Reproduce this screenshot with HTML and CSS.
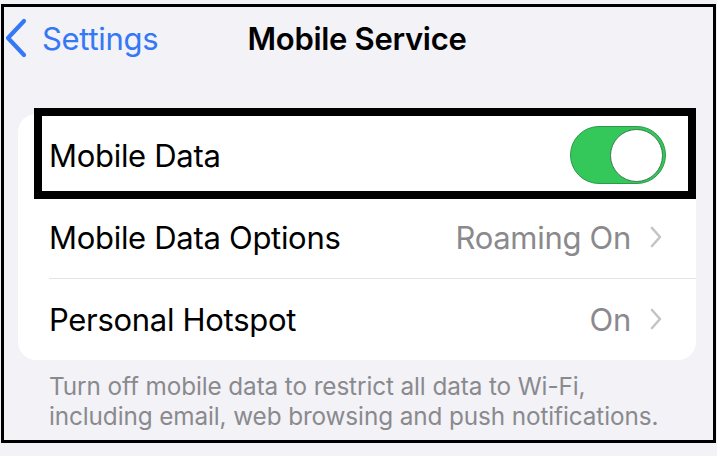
FILE: index.html
```html
<!DOCTYPE html>
<html>
<head>
<meta charset="utf-8">
<link rel="stylesheet" href="styles.css">
</head>
<body>
<div class="frame">
  <div class="nav">
    <div class="back">
      <svg class="back-chev" width="24" height="40" viewBox="0 0 24 40"><path d="M20 3 L4 20 L20 37" fill="none" stroke="#3478f6" stroke-width="4.2" stroke-linecap="round" stroke-linejoin="round"/></svg>
      <span>Settings</span>
    </div>
    <div class="title">Mobile Service</div>
  </div>
  <div class="card">
    <div class="row">
      <span class="label">Mobile Data</span>
      <span class="toggle"><span class="knob"></span></span>
    </div>
    <div class="row sep">
      <span class="label">Mobile Data Options</span>
      <span class="value">Roaming On
        <svg class="chev" width="14" height="22" viewBox="0 0 14 22"><path d="M3 2 L11 11 L3 20" fill="none" stroke="#c4c4c8" stroke-width="2.6" stroke-linecap="round" stroke-linejoin="round"/></svg>
      </span>
    </div>
    <div class="row sep">
      <span class="label">Personal Hotspot</span>
      <span class="value">On
        <svg class="chev" width="14" height="22" viewBox="0 0 14 22"><path d="M3 2 L11 11 L3 20" fill="none" stroke="#c4c4c8" stroke-width="2.6" stroke-linecap="round" stroke-linejoin="round"/></svg>
      </span>
    </div>
    <div class="highlight"></div>
  </div>
  <p class="footer">Turn off mobile data to restrict all data to Wi-Fi,<br>including email, web browsing and push notifications.</p>
</div>
</body>
</html>
```

FILE: styles.css
```css
html, body {
  margin: 0;
  padding: 0;
  background: #f2f2f7;
  font-family: Inter, "Liberation Sans", sans-serif;
}
.frame {
  box-sizing: border-box;
  width: 715px;
  height: 439px;
  margin: 4px 0 0 1px;
  border: 3px solid #000;
  background: #f2f2f7;
  overflow: hidden;
}
.nav {
  position: relative;
  height: 62px;
  display: flex;
  align-items: center;
  justify-content: center;
}
.back {
  position: absolute;
  left: 0;
  top: 11px;
  display: flex;
  align-items: center;
  gap: 14px;
  color: #3478f6;
  font-size: 31px;
  letter-spacing: -0.3px;
}
.title {
  font-size: 31px;
  font-weight: 600;
  color: #000;
  letter-spacing: -0.3px;
  margin-left: -3px;
}
.card {
  position: relative;
  margin: 45px 17px 0 14px;
  background: #fff;
  border-radius: 18px;
}
.row {
  height: 82px;
  display: flex;
  align-items: center;
  justify-content: space-between;
  padding: 0 30px 0 31px;
  font-size: 31px;
  letter-spacing: -0.3px;
  color: #000;
  position: relative;
}
.row.sep::before {
  content: "";
  position: absolute;
  left: 31px;
  right: 0;
  top: 0;
  border-top: 1px solid #e3e3e6;
}
.value {
  display: flex;
  align-items: center;
  gap: 18px;
  color: #8a8a8e;
}
.chev {
  margin-right: 3px;
}
.toggle {
  box-sizing: border-box;
  width: 96px;
  height: 58px;
  border-radius: 29px;
  background: #34c759;
  border: 1.5px solid #2b9b4b;
  display: flex;
  align-items: center;
  justify-content: flex-end;
  padding-right: 2px;
}
.knob {
  box-sizing: border-box;
  width: 53px;
  height: 53px;
  border-radius: 50%;
  background: #fff;
  border: 1.5px solid #3a7a50;
}
.highlight {
  position: absolute;
  left: 16px;
  top: -6px;
  right: 0;
  height: 91px;
  box-sizing: border-box;
  border: 8px solid #000;
}
.footer {
  margin: 11px 0 0 45px;
  font-size: 24.3px;
  line-height: 30px;
  color: #8a8a8e;
  letter-spacing: -0.1px;
}
```
